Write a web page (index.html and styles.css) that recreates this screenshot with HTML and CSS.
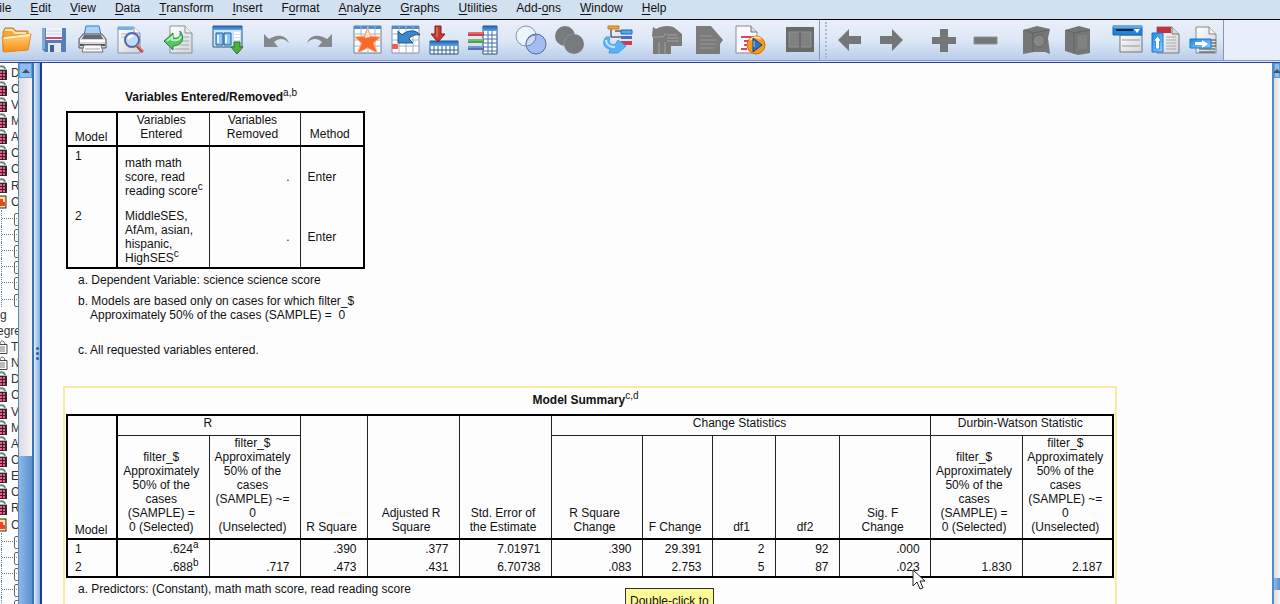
FILE: index.html
```html
<!DOCTYPE html>
<html lang="en">
<head>
    <meta charset="UTF-8">
    <meta name="viewport" content="width=device-width, initial-scale=1.0">
    <title>Statistics Viewer</title>
    <link rel="stylesheet" href="styles.css">
</head>
<body>
    <svg class="defs" aria-hidden="true">
        <defs>
            <linearGradient id="gFolder" x1="0" y1="0" x2="0" y2="1"><stop offset="0" stop-color="#ffd27a"/><stop offset="1" stop-color="#fb8c14"/></linearGradient>
            <linearGradient id="gBlue" x1="0" y1="0" x2="0" y2="1"><stop offset="0" stop-color="#1d62a8"/><stop offset="1" stop-color="#5fa6e2"/></linearGradient>
            <linearGradient id="gPage" x1="0" y1="0" x2="1" y2="1"><stop offset="0" stop-color="#ffffff"/><stop offset="1" stop-color="#cfd3d8"/></linearGradient>
            <linearGradient id="gSky" x1="0" y1="0" x2="1" y2="1"><stop offset="0" stop-color="#1b86e6"/><stop offset="1" stop-color="#8fd0ff"/></linearGradient>
            <g id="calc">
                <path d="M-2 5C-2 0 5 0 5 5" fill="none" stroke="#6d8a80" stroke-width="2"/>
                <rect x="-3" y="4" width="10" height="11" fill="#3a2430"/>
                <path d="M0 6h2v2h-2zM3 6h2v2h-2zM0 9h2v2h-2zM3 9h2v2h-2zM0 12h2v2h-2zM3 12h2v2h-2z" fill="#f05a86"/>
                <path d="M-3 4.500h10" stroke="#a9b8b2"/>
            </g>
            <g id="note">
                <path d="M0 5C0 1 4 1 5 5" fill="none" stroke="#555"/>
                <path d="M-3 5.500h10v9h-10" fill="#fff" stroke="#444"/>
                <path d="M0 8h5M0 10h5M0 12h5" stroke="#777"/>
            </g>
            <g id="chart">
                <rect x="-4" y="2" width="10" height="12" fill="#ffe19a" stroke="#3a2410"/>
                <path d="M0 5h3v3h2v4h-5z" fill="#e8452c"/>
            </g>
        </defs>
    </svg>

    <nav class="menubar">
        <button><u>F</u>ile</button>
        <button><u>E</u>dit</button>
        <button><u>V</u>iew</button>
        <button><u>D</u>ata</button>
        <button><u>T</u>ransform</button>
        <button><u>I</u>nsert</button>
        <button>F<u>o</u>rmat</button>
        <button><u>A</u>nalyze</button>
        <button><u>G</u>raphs</button>
        <button><u>U</u>tilities</button>
        <button>Add-<u>o</u>ns</button>
        <button><u>W</u>indow</button>
        <button><u>H</u>elp</button>
    </nav>

    <div class="toolbars">
        <div class="toolbar main-tools">
            <div class="group">
                <button aria-label="Open"><svg viewBox="0 0 32 32"><path d="M3 28V8l2-4h8l3 3h12v6" fill="#f7a63a" stroke="#d07a14"/><path d="M5 6h7l3 3h11" stroke="#ffe2a6" stroke-width="2" fill="none"/><path d="M2 13l29-3-3 16-24 2z" fill="url(#gFolder)" stroke="#e08a1c"/><path d="M4 14l26-3" stroke="#fff0c8" stroke-width="2"/></svg></button>
                <button aria-label="Save"><svg viewBox="0 0 32 32"><path d="M4 4h24v24H7l-3-3z" fill="#5480b4"/><path d="M4 4h3v21H4z" fill="#86a9d2"/><path d="M8 4h16v12H8z" fill="#f4f5fa"/><path d="M8 14h16" stroke="#d8456a" stroke-width="2"/><path d="M9 7h14M9 10h14" stroke="#c9cfdd"/><path d="M10 19h13v9H10z" fill="#e2e6ed"/><path d="M12 21h4v7h-4z" fill="#3d628f"/></svg></button>
                <button aria-label="Print"><svg viewBox="0 0 32 32"><path d="M8 11L10 2h13l2 9z" fill="#a6d3fa" stroke="#3c78b4"/><path d="M3 15l4-5h19l4 5v9H3z" fill="#d5d8dc" stroke="#4c5056"/><path d="M8 11h17l2 4H6z" fill="#666c74"/><path d="M4 17h25" stroke="#fff" stroke-width="2"/><path d="M4 21h25" stroke="#50545a" stroke-width="2"/><path d="M8 21h17l2 7H6z" fill="#fafafa" stroke="#777"/><path d="M9 25h15" stroke="#aaa"/></svg></button>
                <button aria-label="Print preview"><svg viewBox="0 0 32 32"><path d="M4 3h16l6 6v20H4z" fill="url(#gPage)" stroke="#8593a8"/><path d="M4 3h15v3H4z" fill="#6db2ee"/><path d="M20 3v6h6" fill="#fff" stroke="#8593a8"/><path d="M7 10h8M7 13h4" stroke="#b5bcc8"/><circle cx="18" cy="16" r="7" fill="#c2dcf8" stroke="#5569a4" stroke-width="2"/><path d="M14 15a5 5 0 0 1 5-3" stroke="#fff" stroke-width="2" fill="none"/><path d="M23 22l6 6" stroke="#b34434" stroke-width="3"/><path d="M23 21l7 7" stroke="#f0a080"/></svg></button>
            </div>
            <div class="group">
                <button aria-label="Export"><svg viewBox="0 0 32 32"><path d="M7 2h15l7 7v20H7z" fill="url(#gPage)" stroke="#8a9099"/><path d="M22 2v7h7" fill="#eee" stroke="#8a9099"/><path d="M18 13h8M18 17h8M17 21h9M12 25h14" stroke="#a6abb2"/><path d="M1 17l9-8v5c6 1 8-2 7-7 5 6 3 15-7 15v4z" fill="#56c466" stroke="#1f8a36"/><path d="M4 17l5-4v3c5 1 8 0 9-4" stroke="#b6f0bc" stroke-width="2" fill="none"/></svg></button>
            </div>
            <div class="group">
                <button aria-label="Recall dialogs"><svg viewBox="0 0 32 32"><path d="M1 2h29v21H1z" fill="#cfe4f8" stroke="#24598f"/><path d="M1 2h29v4H1z" fill="url(#gBlue)"/><path d="M4 9h7v12H4zM12 9h7v12h-7z" fill="#8cc4f5" stroke="#1a5d9c"/><path d="M6 11v8M14 11v8" stroke="#e4f3ff" stroke-width="2"/><path d="M22 9h6M22 12h6M22 15h6" stroke="#fff" stroke-width="2"/><path d="M22 18h6v5h3l-6 7-6-7h3z" fill="#4fae42" stroke="#23771f"/></svg></button>
            </div>
            <div class="group loose">
                <button aria-label="Undo"><svg viewBox="0 0 32 32"><path d="M3 10l5 5c7-5 17-5 20 4-5-5-10-5-15-1l4 5H3z" fill="#86898b"/></svg></button>
                <button aria-label="Redo"><svg viewBox="0 0 32 32"><path d="M29 10l-5 5c-7-5-17-5-20 4 5-5 10-5 15-1l-4 5h14z" fill="#86898b"/></svg></button>
            </div>
            <div class="group">
                <button aria-label="Go to data"><svg viewBox="0 0 32 32"><path d="M2 2h27v27H2z" fill="#fff" stroke="#6e7b90"/><path d="M2 2h27v3H2z" fill="#4c8cd0"/><path d="M2 10h27M2 16h27M2 22h27M9 2v27M16 2v27M23 2v27" stroke="#a2b2cc"/><path d="M15.500 3l3 9 10 1-7 6 4 10-10-5-10 5 4-10-7-6 10-1z" fill="#f96a2a" stroke="#ffb08a"/><path d="M15.500 5l3 8-6 1z" fill="#ffe3d0"/></svg></button>
                <button aria-label="Go to case"><svg viewBox="0 0 32 32"><path d="M2 2h27v27H2z" fill="#fff" stroke="#8792a5"/><path d="M2 2h27v3H2z" fill="#4c8cd0"/><path d="M2 10h27M2 16h27M2 22h27M9 2v27M16 2v27M23 2v27" stroke="#a2b2cc"/><path d="M2 20h6v5H2z" fill="#ef6050"/><path d="M8 7l4 4c5-5 14-6 18 0-5-1-9 1-11 4l4 4H8z" fill="#3e86cc" stroke="#1d5796"/></svg></button>
                <button aria-label="Insert cases"><svg viewBox="0 0 32 32"><path d="M2 17h28v13H2z" fill="#f4faff" stroke="#2a4e80"/><path d="M2 17h28v5H2z" fill="url(#gBlue)"/><path d="M2 26h28M6 22v8M10 22v8M14 22v8M18 22v8M22 22v8M26 22v8" stroke="#3d618f"/><path d="M7 2h6v8h4l-7 8-7-8h4z" fill="#c43a30" stroke="#7c1a18"/><path d="M9 3v10" stroke="#ec8a7a"/></svg></button>
                <button aria-label="Variables"><svg viewBox="0 0 32 32"><path d="M17 2h14v28H17z" fill="#fff" stroke="#24508a"/><path d="M17 2h14v5H17z" fill="url(#gBlue)"/><path d="M17 11h14M17 15h14M17 19h14M17 23h14M17 27h14M22 7v23M26 7v23" stroke="#4571ad"/><path d="M2 10h16" stroke="#d83a4a" stroke-width="4"/><path d="M2 17h16" stroke="#48a64c" stroke-width="4"/><path d="M2 24h16" stroke="#5570b8" stroke-width="4"/><path d="M2 9h15M2 16h15M2 23h15" stroke="#fff" opacity=".5"/></svg></button>
            </div>
            <div class="group">
                <button aria-label="Select cases"><svg viewBox="0 0 32 32"><circle cx="11" cy="12" r="10" fill="#edf5fd" stroke="#8795a8"/><circle cx="21" cy="20" r="10" fill="#a3bdf2" stroke="#586b9a"/><path d="M11 20a10 10 0 0 1 10-9 10 10 0 0 1-10 11z" fill="#cddcf8" stroke="#6c7fa8"/></svg></button>
                <button aria-label="Use sets"><svg viewBox="0 0 32 32"><circle cx="12" cy="12" r="10" fill="#777b7e"/><circle cx="21" cy="20" r="10" fill="#777b7e"/><path d="M11 21a10 10 0 0 1 11-11" stroke="#8d9194" fill="none"/></svg></button>
            </div>
            <div class="group">
                <button aria-label="Designate window"><svg viewBox="0 0 32 32"><path d="M9 4v9h18M13 7h12" stroke="#222" fill="none"/><path d="M6 2h11v3H6z" fill="#f5a137" stroke="#c97a18"/><path d="M19 6h11v4H19z" fill="#5aa6ec" stroke="#2365a8"/><path d="M19 12h11v3H19z" fill="#3f70c8"/><path d="M19 17h11v4H19z" fill="#d43b48"/><path d="M4 13c-4 5-3 11 4 12l-1 4h9l8-7-8-6-3 5c-5 0-7-3-5-8z" fill="#5db2f6" stroke="#4a9be6"/><path d="M4 16c0 4 3 7 9 7" stroke="#c8e8ff" stroke-width="2" fill="none"/></svg></button>
            </div>
            <div class="group loose">
                <button aria-label="Promote"><svg viewBox="0 0 32 32"><path d="M2 3l3 2c6-4 17-4 20 0l6 5v12H20v8H2V14l-1-2z" fill="#7a7b7a"/><path d="M2 13h10l3-4M16 11h10M16 14h12M16 17h12M8 18v12M14 18v12" stroke="#a0a2a2" fill="none"/></svg></button>
                <button aria-label="Script"><svg viewBox="0 0 32 32"><path d="M3 2h15l12 14-3 4v10H3z" fill="#7a7b7a"/><path d="M7 12h12M7 16h16M7 20h16M7 24h14" stroke="#979999"/></svg></button>
                <button aria-label="Run script"><svg viewBox="0 0 32 32"><path d="M1 2h15l6 6v21H1z" fill="#fafafa" stroke="#858b94"/><path d="M16 2v6h6" fill="#ddd" stroke="#777"/><path d="M6 13h13M9 17h8M9 21h5M6 25h6" stroke="#d84470" stroke-width="2"/><circle cx="21" cy="21" r="9" fill="#f5991f" stroke="#c76c10"/><path d="M15 16a8 8 0 0 1 11-1" stroke="#ffdc96" stroke-width="2" fill="none"/><path d="M18 14l9 7-9 7z" fill="#3273c0" stroke="#153f7c"/><path d="M19 17v6" stroke="#9cccff"/></svg></button>
            </div>
            <div class="group">
                <button aria-label="Grid"><svg viewBox="0 0 32 32"><path d="M2 3h28v25H2z" fill="#696b6a"/><path d="M5 8h22v15H5z" fill="#7f8180" stroke="#909291"/><path d="M16 8v15" stroke="#696b6a" stroke-width="2"/></svg></button>
            </div>
        </div>
        <div class="toolbar outline-tools">
            <div class="group loose">
                <button aria-label="Back"><svg viewBox="0 0 32 32"><path d="M5 16L16 5v7h12v8H16v7z" fill="#747779"/></svg></button>
                <button aria-label="Forward"><svg viewBox="0 0 32 32"><path d="M28 16L17 5v7H5v8h12v7z" fill="#747779"/></svg></button>
            </div>
            <div class="group loose">
                <button aria-label="Expand"><svg viewBox="0 0 32 32"><path d="M14 5h8v8h8v7h-8v8h-8v-8H6v-7h8z" fill="#747779"/></svg></button>
                <button aria-label="Collapse"><svg viewBox="0 0 32 32"><path d="M6 13h23v7H6z" fill="#747779" stroke="#8f9294"/></svg></button>
            </div>
            <div class="group loose">
                <button aria-label="Show"><svg viewBox="0 0 32 32"><path d="M4 6l14-4 13 3-2 9 2 16-5-2H15L4 30z" fill="#757776"/><path d="M5 6l9 3v19M14 9l16-3" stroke="#626463" fill="none"/><circle cx="20" cy="17" r="6" fill="#858786" stroke="#626463"/></svg></button>
                <button aria-label="Hide"><svg viewBox="0 0 32 32"><path d="M4 6l14-4 11 3v24l-12 2-13-4z" fill="#757776"/><path d="M5 6l8 3v21M13 9l16-3" stroke="#626463" fill="none"/><path d="M17 11h9v14h-9z" fill="#808281"/></svg></button>
            </div>
            <div class="group">
                <button aria-label="Insert heading"><svg viewBox="0 0 32 32"><path d="M8 11h22v17H8z" fill="url(#gPage)" stroke="#777"/><path d="M10 16h18M10 22h18" stroke="#999"/><path d="M1 2h29v9H1z" fill="#2583d8" stroke="#1a66b0"/><path d="M1 3h29" stroke="#a2d6ff"/><path d="M4 6h17" stroke="#0c2340" stroke-width="2"/><path d="M22 5h6l-3 4z" fill="#fff"/></svg></button>
                <button aria-label="Insert title"><svg viewBox="0 0 32 32"><path d="M7 3h15l7 7v19H7z" fill="url(#gPage)" stroke="#777"/><path d="M22 3v7h7" fill="#ddd" stroke="#777"/><path d="M7 3h14v6H7z" fill="#c82f3c"/><path d="M16 13h10M16 16h10M16 19h10M16 22h10M16 25h10" stroke="#aaa"/><path d="M2 9h11v19H2z" fill="url(#gSky)" stroke="#1a78d0"/><path d="M7.500 12l4 5h-2v8h-4v-8h-2z" fill="#fff" stroke="#3c90dc"/></svg></button>
                <button aria-label="Insert text"><svg viewBox="0 0 32 32"><path d="M8 3h13l7 7v19H8z" fill="url(#gPage)" stroke="#888"/><path d="M21 3v7h7" fill="#eee" stroke="#888"/><path d="M11 25h16M11 28h16M23 16h5M23 19h5M23 22h5" stroke="#444"/><path d="M2 15h21v9H2z" fill="url(#gSky)" stroke="#1a78d0"/><path d="M7 18h7v-2l6 4-6 4v-3H7z" fill="#fff"/></svg></button>
            </div>
        </div>
    </div>

    <div class="viewer">
        <aside class="outline">
            <ul>
                <li><svg><use href="#calc"/></svg>D</li>
                <li><svg><use href="#calc"/></svg>C</li>
                <li><svg><use href="#calc"/></svg>V</li>
                <li><svg><use href="#calc"/></svg>M</li>
                <li><svg><use href="#calc"/></svg>A</li>
                <li><svg><use href="#calc"/></svg>C</li>
                <li><svg><use href="#calc"/></svg>C</li>
                <li><svg><use href="#calc"/></svg>R</li>
                <li><svg><use href="#chart"/></svg>C</li>
                <li class="leaf"></li>
                <li class="leaf"></li>
                <li class="leaf"></li>
                <li class="leaf"></li>
                <li class="leaf"></li>
                <li class="leaf"></li>
                <li>g</li>
                <li class="cut">egre</li>
                <li><svg><use href="#note"/></svg>T</li>
                <li><svg><use href="#note"/></svg>N</li>
                <li><svg><use href="#calc"/></svg>D</li>
                <li><svg><use href="#calc"/></svg>C</li>
                <li><svg><use href="#calc"/></svg>V</li>
                <li><svg><use href="#calc"/></svg>M</li>
                <li><svg><use href="#calc"/></svg>A</li>
                <li><svg><use href="#calc"/></svg>C</li>
                <li><svg><use href="#calc"/></svg>E</li>
                <li><svg><use href="#calc"/></svg>C</li>
                <li><svg><use href="#calc"/></svg>R</li>
                <li><svg><use href="#chart"/></svg>C</li>
                <li class="leaf"></li>
                <li class="leaf"></li>
                <li class="leaf"></li>
                <li class="leaf"></li>
                <li class="leaf"></li>
            </ul>
        </aside>
        <div class="scrollbar">
            <div class="arrow"></div>
            <div class="track"></div>
            <div class="thumb"></div>
        </div>
        <div class="splitter"><i></i><i></i><i></i></div>

        <main class="output">
            <section class="object">
                <h2>Variables Entered/Removed<sup>a,b</sup></h2>
                <table class="pivot entered">
                    <colgroup>
                        <col class="w50"><col class="w92"><col class="w91"><col class="w64">
                    </colgroup>
                    <thead>
                        <tr>
                            <th class="model">Model</th>
                            <th>Variables<br>Entered</th>
                            <th>Variables<br>Removed</th>
                            <th>Method</th>
                        </tr>
                    </thead>
                    <tbody>
                        <tr>
                            <th>1</th>
                            <td>math math<br>score, read<br>reading score<sup>c</sup></td>
                            <td class="num">.</td>
                            <td>Enter</td>
                        </tr>
                        <tr>
                            <th>2</th>
                            <td>MiddleSES,<br>AfAm, asian,<br>hispanic,<br>HighSES<sup>c</sup></td>
                            <td class="num">.</td>
                            <td>Enter</td>
                        </tr>
                    </tbody>
                </table>
                <div class="notes">
                    <p>a. Dependent Variable: science science score</p>
                    <p>b. Models are based only on cases for which filter_$<br>Approximately 50% of the cases (SAMPLE) = &nbsp;0</p>
                    <p class="spaced">c. All requested variables entered.</p>
                </div>
            </section>

            <section class="object selected">
                <h2>Model Summary<sup>c,d</sup></h2>
                <table class="pivot summary">
                    <colgroup>
                        <col class="w50"><col class="w92"><col class="w91"><col class="w67"><col class="w92"><col class="w92"><col class="w91"><col class="w70"><col class="w63"><col class="w64"><col class="w91"><col class="w92"><col class="w91">
                    </colgroup>
                    <thead>
                        <tr class="spans">
                            <th class="model" rowspan="2">Model</th>
                            <th class="span" colspan="2">R</th>
                            <th rowspan="2">R Square</th>
                            <th rowspan="2">Adjusted R<br>Square</th>
                            <th rowspan="2">Std. Error of<br>the Estimate</th>
                            <th class="span" colspan="5">Change Statistics</th>
                            <th class="span" colspan="2">Durbin-Watson Statistic</th>
                        </tr>
                        <tr class="labels">
                            <th>filter_$<br>Approximately<br>50% of the<br>cases<br>(SAMPLE) =<br>0 (Selected)</th>
                            <th>filter_$<br>Approximately<br>50% of the<br>cases<br>(SAMPLE) ~=<br>0<br>(Unselected)</th>
                            <th>R Square<br>Change</th>
                            <th>F Change</th>
                            <th>df1</th>
                            <th>df2</th>
                            <th>Sig. F<br>Change</th>
                            <th>filter_$<br>Approximately<br>50% of the<br>cases<br>(SAMPLE) =<br>0 (Selected)</th>
                            <th>filter_$<br>Approximately<br>50% of the<br>cases<br>(SAMPLE) ~=<br>0<br>(Unselected)</th>
                        </tr>
                    </thead>
                    <tbody>
                        <tr>
                            <th>1</th>
                            <td>.624<sup>a</sup></td>
                            <td></td>
                            <td>.390</td>
                            <td>.377</td>
                            <td>7.01971</td>
                            <td>.390</td>
                            <td>29.391</td>
                            <td>2</td>
                            <td>92</td>
                            <td>.000</td>
                            <td></td>
                            <td></td>
                        </tr>
                        <tr>
                            <th>2</th>
                            <td>.688<sup>b</sup></td>
                            <td>.717</td>
                            <td>.473</td>
                            <td>.431</td>
                            <td>6.70738</td>
                            <td>.083</td>
                            <td>2.753</td>
                            <td>5</td>
                            <td>87</td>
                            <td>.023</td>
                            <td>1.830</td>
                            <td>2.187</td>
                        </tr>
                    </tbody>
                </table>
                <div class="notes">
                    <p>a. Predictors: (Constant), math math score, read reading score</p>
                </div>
                <div class="tooltip">Double-click to</div>
                <svg class="cursor" viewBox="0 0 14 22"><path d="M1 1v16l4-4 3 7 3-1-3-7h5z" fill="#fff" stroke="#222"/></svg>
            </section>
        </main>

        <div class="scrollbar right">
            <div class="arrow"></div>
            <div class="track"></div>
            <div class="thumb"></div>
            <div class="track end"></div>
        </div>
    </div>
</body>
</html>
```

FILE: styles.css
```css
* {
    box-sizing: border-box;
}
body {
    margin: 0;
    height: 100vh;
    display: flex;
    flex-direction: column;
    overflow: hidden;
    font-family: "Liberation Sans", Arial, sans-serif;
    font-size: 12px;
    line-height: 14px;
    color: #111;
    background: #fdfdfe;
}
button {
    border: 0;
    padding: 0;
    background: none;
    font: inherit;
    color: inherit;
}
.defs {
    position: absolute;
    width: 0;
    height: 0;
}

/* menu bar */
.menubar {
    display: flex;
    flex: none;
    gap: 19px;
    height: 20px;
    margin-left: -8px;
    padding-bottom: 3px;
    background: #d2e1f0;
    border-bottom: 1px solid #000;
}
.menubar button {
    flex: none;
}
.menubar u {
    text-underline-offset: 2px;
}

/* toolbars */
.toolbars {
    display: flex;
    flex: none;
    height: 43px;
    background: #e8effb;
    border-bottom: 1px solid #2a3f9c;
    box-shadow: inset 0 -1px #dfe8f8, inset 0 -2px #7f97c4;
}
.toolbar {
    display: flex;
    flex: none;
    align-items: center;
    height: 40px;
    background: linear-gradient(#e9eff8, #dde8f6 50%, #b9cdea);
}
.main-tools {
    gap: 11px;
    margin-left: -3px;
    border-right: 1px solid #8396b4;
}
.outline-tools {
    gap: 13px;
    padding-left: 5px;
    border-right: 1px solid #8396b4;
}
.outline-tools::before {
    content: "";
    align-self: stretch;
    margin: 2px -10px 2px 0;
    border-left: 2px dotted #a9bad6;
}
.group {
    display: flex;
}
.group.loose {
    gap: 4px;
}
.toolbar button {
    display: flex;
    justify-content: center;
    width: 38px;
}
.toolbar svg {
    width: 32px;
    height: 32px;
}

/* outline pane */
.viewer {
    display: flex;
    flex: 1;
    min-height: 0;
}
.outline {
    flex: none;
    width: 18px;
    overflow: hidden;
    background: #fff;
}
.outline ul {
    margin: 0;
    padding: 2px 0 0;
    list-style: none;
}
.outline li {
    display: flex;
    gap: 3px;
    height: 16px;
    line-height: 16px;
    color: #333;
}
.outline li:nth-child(7n) {
    margin-bottom: 1px;
}
.outline .cut {
    margin-left: -3px;
}
.outline li svg {
    flex: none;
    width: 8px;
    height: 16px;
}
.outline .leaf {
    position: relative;
    border-left: 1px dotted #5c86ac;
    margin-left: 1px;
}
.outline .leaf::before {
    content: "";
    width: 15px;
    height: 8px;
    border-bottom: 1px dotted #5c86ac;
}
.outline .leaf::after {
    content: "";
    position: absolute;
    right: -2px;
    top: 3px;
    width: 4px;
    height: 11px;
    border: 1px solid #666;
    border-radius: 2px;
}

/* scroll bars */
.scrollbar {
    display: flex;
    flex-direction: column;
    flex: none;
    width: 16px;
    border-left: 1px solid #4c8cc8;
    border-right: 2px solid #3b74b4;
}
.scrollbar .arrow {
    display: flex;
    justify-content: center;
    align-items: center;
    height: 15px;
    background: #8dbdf0;
    border: 1px solid #5d9ad8;
}
.scrollbar .arrow::before {
    content: "";
    border: 4px solid transparent;
    border-top: 0;
    border-bottom-color: #4a4f58;
}
.scrollbar .track {
    flex: 378;
    background: linear-gradient(90deg, #dcdce2, #f4f2f4);
}
.scrollbar .thumb {
    flex: 148;
    background: linear-gradient(90deg, #8db8e8, #5a90d0);
}
.scrollbar.right {
    width: 8px;
    overflow: hidden;
    border-right: 0;
    border-left-width: 2px;
}
.right .track {
    flex: 500;
}
.right .thumb {
    flex: 12;
}
.right .end {
    flex: 14;
}
.splitter {
    display: flex;
    flex-direction: column;
    justify-content: center;
    align-items: center;
    gap: 2px;
    flex: none;
    width: 8px;
    padding-top: 40px;
    background: linear-gradient(90deg, #dcebfb, #7fb0e6);
    border-right: 2px solid #1f3c84;
}
.splitter i {
    width: 3px;
    height: 3px;
    border-radius: 50%;
    background: #2f5a9c;
}

/* output pane */
.output {
    flex: 1;
    min-width: 0;
    overflow: hidden;
    padding: 20px 0 0 21px;
}
.object {
    position: relative;
    width: fit-content;
    margin-bottom: 27px;
    padding: 5px 1px 0;
    border: 2px solid transparent;
}
.object.selected {
    padding-bottom: 60px;
    border-color: #f7eba4;
}
.object h2 {
    margin: 0 0 7px;
    padding-right: 9px;
    font-size: 12px;
    line-height: 14px;
    text-align: center;
}
sup {
    font-size: 10px;
    font-weight: normal;
    line-height: 0;
    vertical-align: 5px;
}
.pivot {
    table-layout: fixed;
    border-collapse: collapse;
    border: 2px solid #000;
}
.entered {
    width: 298px;
}
.summary {
    width: 1046px;
}
.w50 { width: 50px; }
.w63 { width: 63px; }
.w64 { width: 64px; }
.w67 { width: 67px; }
.w70 { width: 70px; }
.w91 { width: 91px; }
.w92 { width: 92px; }

.pivot th, .pivot td {
    padding: 0 7px;
    border-left: 1px solid #222;
    font-weight: normal;
    text-align: left;
    white-space: nowrap;
}
.pivot thead {
    border-bottom: 2px solid #000;
}
.pivot thead th {
    padding: 0 4px 4px 0;
    text-align: center;
    vertical-align: bottom;
}
.pivot thead .model {
    padding-bottom: 1px;
    padding-right: 2px;
}
.pivot thead .span {
    padding: 0 2px 3px 0;
    border-bottom: 1px solid #222;
    vertical-align: top;
}
.pivot .model, .pivot tbody th {
    border-right: 2px solid #000;
}
.pivot tbody th {
    padding-top: 2px;
    vertical-align: top;
}
.entered thead tr {
    height: 34px;
}
.entered tbody tr {
    height: 61px;
}
.summary .spans {
    height: 20px;
}
.summary .labels {
    height: 104px;
}
.summary tbody tr {
    height: 19px;
}
.pivot .num, .summary td {
    padding-right: 10px;
    text-align: right;
}
.notes {
    padding: 4px 0 0 12px;
}
.notes p {
    margin: 0 0 7px;
    padding-left: 12px;
    text-indent: -12px;
}
.notes .spaced {
    margin: 21px 0 0;
}
.tooltip {
    position: absolute;
    left: 560px;
    top: 200px;
    padding: 5px 4px 20px;
    background: #fbfa96;
    border: 1px solid #333;
    white-space: nowrap;
}
.cursor {
    position: absolute;
    left: 847px;
    top: 181px;
    width: 14px;
    height: 22px;
}
```
